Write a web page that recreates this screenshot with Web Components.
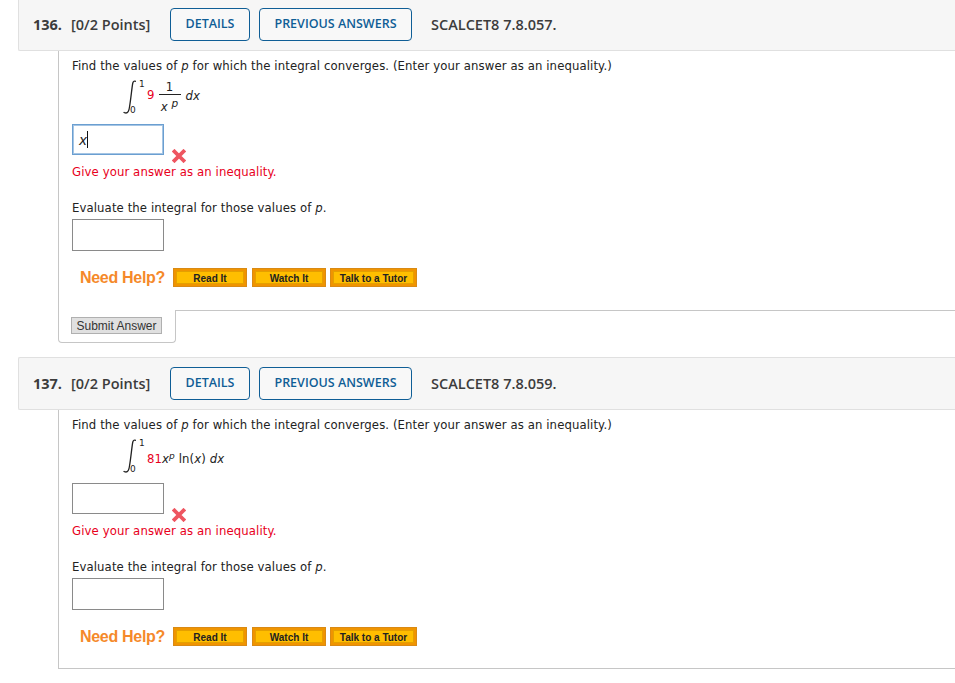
<!DOCTYPE html>
<html>
<head>
<meta charset="utf-8">
<title>Questions</title>
<style>
  html, body { margin: 0; padding: 0; background: #fff; overflow: hidden; }
  body { font-family: "DejaVu Sans", Verdana, sans-serif; font-size: 12px; color: #222; }
  #page { margin-top: -2px; padding-left: 18px; }
  .red { color: #e8001c; }
</style>
</head>
<body>
<div id="page">
  <wa-question number="136." code="SCALCET8 7.8.057." submit>
    <p-text>Find the values of <i>p</i> for which the integral converges. (Enter your answer as an inequality.)</p-text>
    <int-expr>
      <span class="red" style="margin-right:4px">9</span>
      <frac-expr></frac-expr>
      <i style="margin:2px 0 0 5px">dx</i>
    </int-expr>
    <answer-box value="x" focused wrong></answer-box>
    <p-text error>Give your answer as an inequality.</p-text>
    <p-text style="margin-top:20px">Evaluate the integral for those values of <i>p</i>.</p-text>
    <answer-box style="margin-top:3px;height:32px"></answer-box>
    <help-bar></help-bar>
  </wa-question>

  <wa-question number="137." code="SCALCET8 7.8.059.">
    <p-text>Find the values of <i>p</i> for which the integral converges. (Enter your answer as an inequality.)</p-text>
    <int-expr style="--expr-top:13px">
      <span><span class="red">81</span><i>x</i><sup style="font-size:9px;line-height:0;vertical-align:baseline;position:relative;top:-4px"><i>p</i></sup> ln(<i>x</i>) <i>dx</i></span>
    </int-expr>
    <answer-box wrong></answer-box>
    <p-text error>Give your answer as an inequality.</p-text>
    <p-text style="margin-top:20px">Evaluate the integral for those values of <i>p</i>.</p-text>
    <answer-box style="margin-top:3px;height:32px"></answer-box>
    <help-bar style="margin-bottom:22px"></help-bar>
  </wa-question>
</div>

<template id="wa-question-tpl">
  <style>
    :host { display: block; }
    header {
      box-sizing: border-box; height: 53px; display: flex; align-items: center;
      padding: 0 0 0 14px; background: #f6f6f6;
      border: 1px solid #e0e0e0; border-right: none; border-radius: 2px 0 0 2px;
      font: 600 14.5px "Open Sans", sans-serif; color: #3c3c3c;
    }
    .num { width: 38px; font-weight: 700; }
    .pts { width: 99px; }
    .btn {
      box-sizing: border-box; height: 33px; display: flex; align-items: center; justify-content: center;
      padding: 0 0 2px; border: 1px solid #0f5e96; border-radius: 4px; background: #f8f8f8;
      color: #0f5e96; font: 600 12.5px "Open Sans", sans-serif;
    }
    .details { width: 80px; margin-right: 9px; }
    .prev { width: 153px; margin-right: 19px; }
    .body { display: flow-root; margin-left: 40px; padding: 7px 0 0 13px; border-left: 1px solid #c6c6c6; }
    :host(:not([submit])) .body { border-bottom: 1px solid #c6c6c6; }
    .foot { margin-left: 40px; display: flex; height: 33px; margin-bottom: 14px; }
    .tab {
      box-sizing: border-box; width: 118px; height: 33px; padding: 7px 0 0 12px;
      border: 1px solid #c6c6c6; border-top: none; border-radius: 0 0 4px 4px;
    }
    .rest { flex: 1; border-top: 1px solid #c6c6c6; }
    .submit {
      box-sizing: border-box; width: 91px; height: 17px; display: flex; align-items: center; justify-content: center;
      background: #e0e0e0; border: 1px solid #b0b0b0; font: 12px "Liberation Sans", sans-serif; color: #333;
    }
  </style>
  <header>
    <span class="num"></span><span class="pts">[0/2 Points]</span>
    <span class="btn details">DETAILS</span>
    <span class="btn prev">PREVIOUS ANSWERS</span>
    <span class="code"></span>
  </header>
  <div class="body"><slot></slot></div>
  <div class="tail"></div>
</template>

<template id="p-text-tpl">
  <style>
    :host { display: block; font-size: 11.7px; line-height: 16px; color: #222; letter-spacing: .1px; }
    :host([error]) { color: #e8001c; margin-top: 9px; }
  </style>
  <slot></slot>
</template>

<template id="int-expr-tpl">
  <style>
    :host { display: flex; align-items: flex-start; height: 38px; margin: 6px 0 6px 51px; position: relative; font-size: 11.7px; letter-spacing: .1px; }
    svg { width: 13px; height: 34px; flex: none; }
    .lim { position: absolute; font-size: 9px; line-height: 10px; color: #222; }
    .up { left: 16px; top: -1px; }
    .lo { left: 7px; top: 25px; }
    .expr { margin-left: 11px; margin-top: var(--expr-top, 0); display: flex; align-items: center; white-space: pre; }
  </style>
  <svg viewBox="0 0 13 34"><path d="M13 1.400C11.500.6 10.300 1.200 9.800 3 8.800 8 8 18 6.500 27 6 31 4.800 33 3 33 2 33 1 32.600.6 32" fill="none" stroke="#222" stroke-width="1.300"/></svg>
  <span class="lim up">1</span>
  <span class="lim lo">0</span>
  <div class="expr"><slot></slot></div>
</template>

<template id="frac-expr-tpl">
  <style>
    :host { display: inline-flex; flex-direction: column; align-items: center; width: 22px; height: 30px; font-size: 11.7px; }
    .top { flex: none; line-height: 14px; border-bottom: 1px solid #222; width: 100%; text-align: center; }
    .bot { flex: none; line-height: 24px; font-style: italic; white-space: pre; }
    .bot span { font-size: 10.500px; position: relative; top: -4px; }
  </style>
  <div class="top">1</div>
  <div class="bot">x <span>p</span></div>
</template>

<template id="answer-box-tpl">
  <style>
    :host { display: flex; align-items: flex-end; height: 31px; }
    .box {
      box-sizing: border-box; width: 92px; height: 100%; border: 1px solid #8a8a8a; background: #fff;
      display: flex; align-items: center; padding-left: 6px; font-style: italic; font-size: 13.500px; color: #222;
    }
    :host([focused]) .box { border: 1px solid #6b9fd1; box-shadow: inset 0 0 0 1px #a5c5e4; }
    .caret { width: 1px; height: 17px; background: #111; }
    svg { width: 14px; height: 14px; margin-left: 8px; margin-bottom: -8px; flex: none; }
  </style>
  <div class="box"><span class="val"></span></div>
</template>

<template id="help-bar-tpl">
  <style>
    :host { display: flex; align-items: center; height: 19px; margin: 17px 0 23px 8px; }
    .need { width: 93px; font: 700 16px "Liberation Sans", Arial, sans-serif; letter-spacing: -.3px; color: #f5892a; white-space: nowrap; }
    .b {
      box-sizing: border-box; height: 19px; display: flex; align-items: center; justify-content: center; padding-top: 1px;
      background: #ffbe00; border: 1px solid #d98a14; box-shadow: inset 0 0 0 2px #f09400, inset -3px -3px 0 0 #e5a000, inset 3px 3px 0 0 #e5a000;
      font: 700 10px "Liberation Sans", Arial, sans-serif; color: #222;
    }
    .read { width: 74px; margin-right: 5px; }
    .watch { width: 74px; margin-right: 4px; }
    .talk { width: 87px; }
  </style>
  <span class="need">Need Help?</span>
  <span class="b read">Read It</span>
  <span class="b watch">Watch It</span>
  <span class="b talk">Talk to a Tutor</span>
</template>

<script>
  function shadowFrom(el, id) {
    var root = el.attachShadow({ mode: "open" });
    root.appendChild(document.getElementById(id).content.cloneNode(true));
    return root;
  }

  class WaQuestion extends HTMLElement {
    constructor() {
      super();
      var root = shadowFrom(this, "wa-question-tpl");
      root.querySelector(".num").textContent = this.getAttribute("number");
      root.querySelector(".code").textContent = this.getAttribute("code");
      // first question ends in a tab with the submit button, the other just in a rule
      if (this.hasAttribute("submit")) {
        root.querySelector(".tail").innerHTML = '<div class="foot"><div class="tab"><div class="submit">Submit Answer</div></div><div class="rest"></div></div>';
      }
    }
  }

  class PText extends HTMLElement {
    constructor() {
      super();
      shadowFrom(this, "p-text-tpl");
    }
  }

  class IntExpr extends HTMLElement {
    constructor() {
      super();
      shadowFrom(this, "int-expr-tpl");
    }
  }

  class FracExpr extends HTMLElement {
    constructor() {
      super();
      shadowFrom(this, "frac-expr-tpl");
    }
  }

  class AnswerBox extends HTMLElement {
    constructor() {
      super();
      var root = shadowFrom(this, "answer-box-tpl");
      root.querySelector(".val").textContent = this.getAttribute("value") || "";
      if (this.hasAttribute("focused")) {
        var caret = document.createElement("span");
        caret.className = "caret";
        root.querySelector(".box").appendChild(caret);
      }
      if (this.hasAttribute("wrong")) {
        root.innerHTML += '<svg viewBox="0 0 14 14"><path d="M2.500 2.500l9 9M11.500 2.500l-9 9" stroke="#ee5560" stroke-width="3.800" stroke-linecap="square"/></svg>';
      }
    }
  }

  class HelpBar extends HTMLElement {
    constructor() {
      super();
      shadowFrom(this, "help-bar-tpl");
    }
  }

  customElements.define("wa-question", WaQuestion);
  customElements.define("p-text", PText);
  customElements.define("int-expr", IntExpr);
  customElements.define("frac-expr", FracExpr);
  customElements.define("answer-box", AnswerBox);
  customElements.define("help-bar", HelpBar);
</script>
</body>
</html>
